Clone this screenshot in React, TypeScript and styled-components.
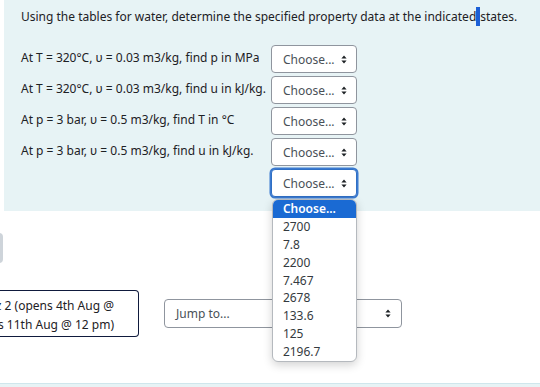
import React from "react";
import styled, { createGlobalStyle } from "styled-components";

const GlobalStyle = createGlobalStyle`
  html, body {
    margin: 0;
    padding: 0;
    background: #fff;
    overflow: hidden;
  }
  body {
    font-family: "Noto Sans", "Open Sans", sans-serif;
    font-size: 12px;
    color: #1d2125;
  }
`;

const rows = [
  "At T = 320°C, υ = 0.03 m3/kg, find p in MPa",
  "At T = 320°C, υ = 0.03 m3/kg, find u in kJ/kg.",
  "At p = 3 bar, υ = 0.5 m3/kg, find T in °C",
  "At p = 3 bar, υ = 0.5 m3/kg, find u in kJ/kg.",
];

const options = ["Choose...", "2700", "7.8", "2200", "7.467", "2678", "133.6", "125", "2196.7"];

const Arrows = () => (
  <svg width="6" height="9" viewBox="0 0 6 9">
    <path d="M3 0.5 L5.6 3.6 H0.4 Z M3 8.5 L5.6 5.4 H0.4 Z" fill="#1d2125" />
  </svg>
);

const App = () => {
  return (
    <Page>
      <GlobalStyle />
      <Panel>
        <Heading>
          Using the tables for water, determine the specified property data at the indicated
          <Caret />
          states.
        </Heading>
        <Grid>
          {rows.map((r) => (
            <React.Fragment key={r}>
              <RowText>{r}</RowText>
              <Select>
                Choose... <Arrows />
              </Select>
            </React.Fragment>
          ))}
          <span />
          <OpenWrap>
            <Select focused>
              Choose... <Arrows />
            </Select>
            <Dropdown>
              {options.map((o, i) => (
                <Option key={o} active={i === 0}>
                  {o}
                </Option>
              ))}
            </Dropdown>
          </OpenWrap>
        </Grid>
      </Panel>
      <GreyButton />
      <NavRow>
        <PrevLink>
          <Line>◄ Quiz 2 (opens 4th Aug @</Line>
          <Line>12 pm, closes 11th Aug @ 12 pm)</Line>
        </PrevLink>
        <JumpSelect>
          Jump to... <Arrows />
        </JumpSelect>
      </NavRow>
      <Footer />
    </Page>
  );
};

const Page = styled.div`
  width: 540px;
  height: 387px;
  display: flex;
  flex-direction: column;
  overflow: hidden;
`;

const Panel = styled.div`
  margin-left: 4px;
  height: 211px;
  box-sizing: border-box;
  background: #e7f3f5;
  padding: 7px 0 0 17px;
`;

const Heading = styled.div`
  line-height: 18px;
  margin-bottom: 19px;
  white-space: nowrap;
`;

const Caret = styled.span`
  display: inline-block;
  width: 4px;
  height: 19px;
  margin: 0 0 -5px;
  background: #1c5fd6;
`;

const Grid = styled.div`
  display: grid;
  grid-template-columns: max-content 86px;
  column-gap: 5px;
  row-gap: 3px;
  align-items: start;
`;

const RowText = styled.div`
  line-height: 18px;
  padding-top: 4px;
  white-space: nowrap;
`;

const Select = styled.div<{ focused?: boolean }>`
  height: 28px;
  box-sizing: border-box;
  display: flex;
  align-items: center;
  justify-content: space-between;
  padding: 0 9px 0 11px;
  background: #fff;
  border: 1px solid ${(p) => (p.focused ? "#2f6fc4" : "#8f959e")};
  border-radius: 4px;
  box-shadow: ${(p) => (p.focused ? "0 0 0 1.5px #3b7ad0" : "none")};
  color: #495057;
  white-space: nowrap;
`;

const OpenWrap = styled.div`
  position: relative;
`;

const Dropdown = styled.div`
  position: absolute;
  top: 30px;
  left: 1px;
  width: 85px;
  box-sizing: border-box;
  background: #fff;
  border: 1px solid #b5b9be;
  border-radius: 6px;
  box-shadow: 0 3px 10px rgba(0, 0, 0, 0.18);
  overflow: hidden;
  z-index: 5;
`;

const Option = styled.div<{ active?: boolean }>`
  height: 17.9px;
  line-height: 17.9px;
  padding-left: 10px;
  color: ${(p) => (p.active ? "#fff" : "#343a40")};
  background: ${(p) => (p.active ? "#1a6ad3" : "transparent")};
  font-weight: ${(p) => (p.active ? 600 : 400)};
`;

const GreyButton = styled.div`
  margin: 22px 0 0 -37px;
  width: 40px;
  height: 30px;
  border-radius: 4px;
  background: #ced4da;
`;

const NavRow = styled.div`
  margin-top: 27px;
  display: flex;
  align-items: center;
  gap: 25px;
`;

const PrevLink = styled.div`
  width: 139px;
  height: 47px;
  box-sizing: border-box;
  border: 1px solid #0f1a3d;
  border-left: none;
  border-radius: 0 4px 4px 0;
  padding: 2px 24px 0 0;
  display: flex;
  flex-direction: column;
  justify-content: center;
  overflow: hidden;
  color: #1d2125;
`;

const Line = styled.div`
  display: flex;
  justify-content: flex-end;
  white-space: nowrap;
  line-height: 19px;
`;

const JumpSelect = styled.div`
  width: 238px;
  height: 29px;
  box-sizing: border-box;
  display: flex;
  align-items: center;
  justify-content: space-between;
  padding: 0 10px 0 11px;
  border: 1px solid #8f959e;
  border-radius: 4px;
  color: #495057;
`;

const Footer = styled.div`
  margin-top: auto;
  height: 3px;
  background: #e7f3f5;
  border-top: 1px solid #cfe6ec;
`;

export default App;
